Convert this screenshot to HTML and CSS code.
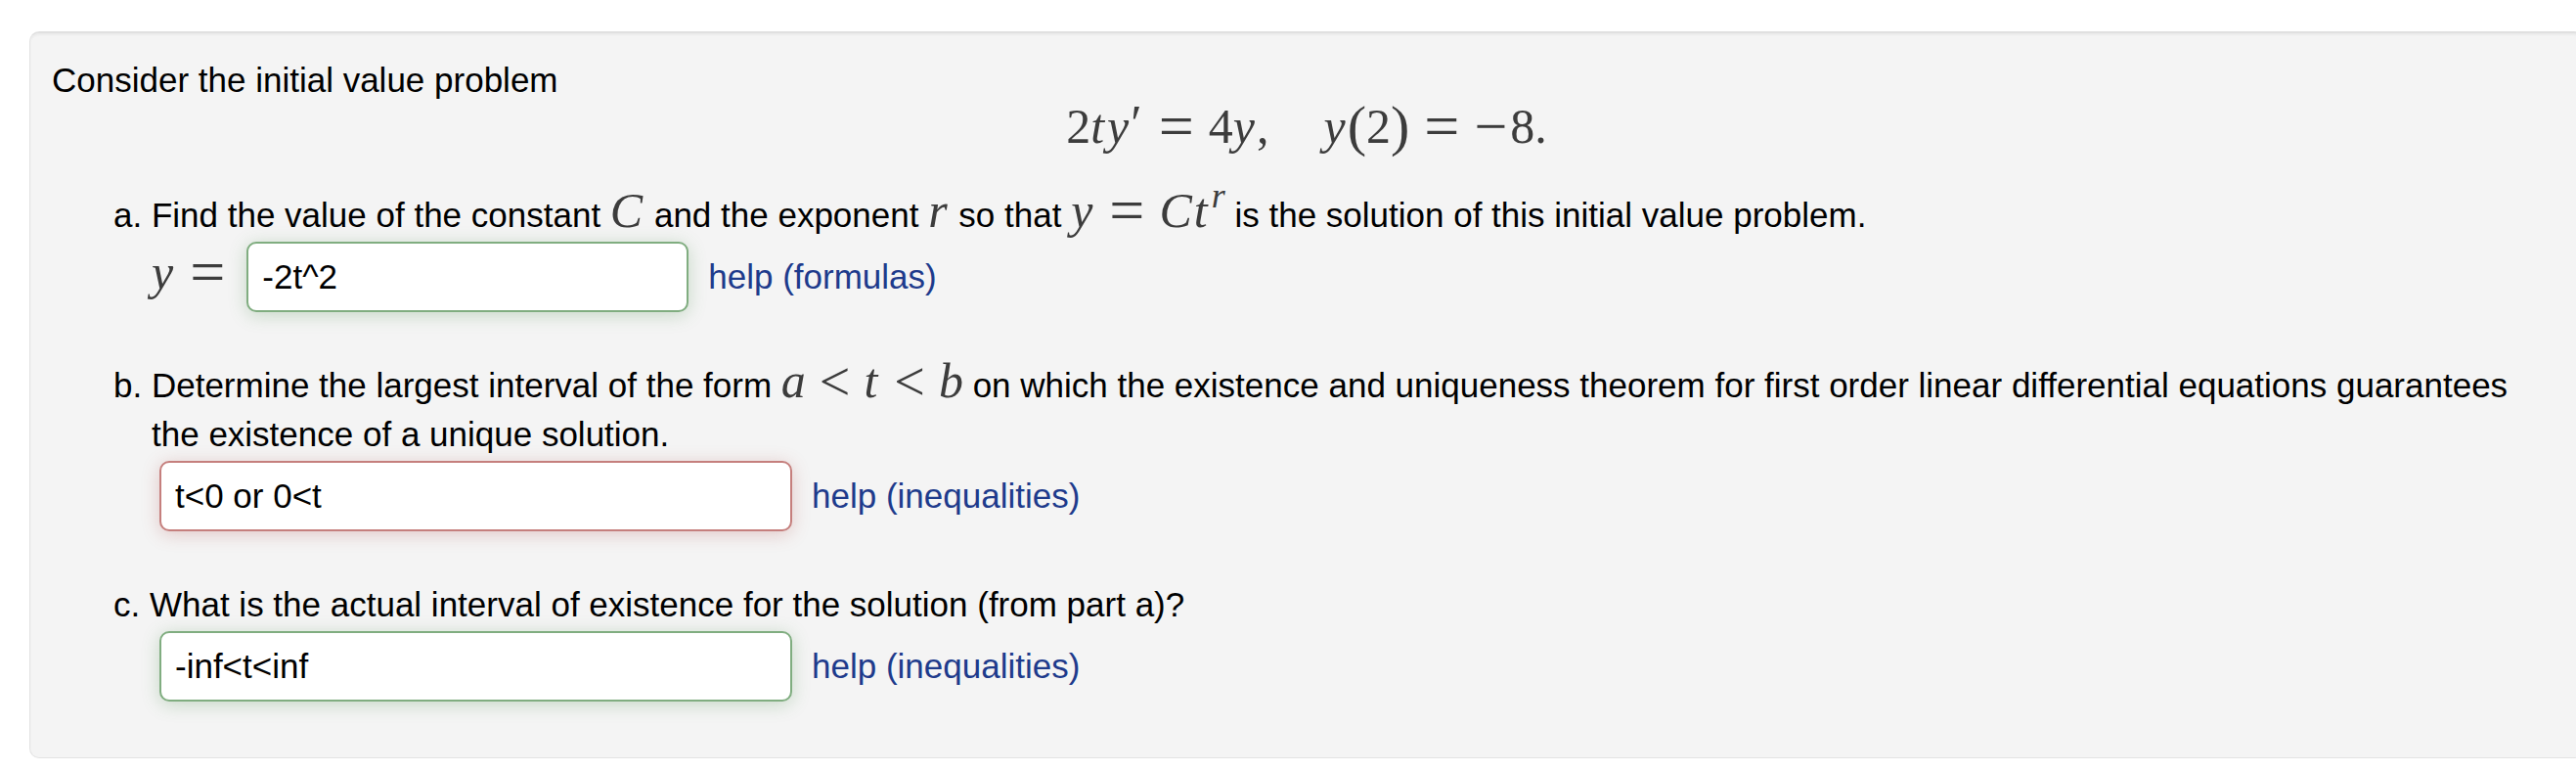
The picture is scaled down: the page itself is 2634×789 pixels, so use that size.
FILE: index.html
```html
<!DOCTYPE html>
<html lang="en">
<head>
<meta charset="utf-8">
<title>Initial value problem</title>
<link rel="stylesheet" href="styles.css">
</head>
<body>
<div class="problem">
  <div class="intro">Consider the initial value problem</div>
  <div class="display"><span class="mn">2</span><span class="mi t">t</span><span class="mi y">y</span><span class="prime">′</span><span class="rel">=</span><span class="mn">4</span><span class="mi y">y</span><span class="punct">,</span><span class="quad"></span><span class="mi y">y</span><span class="paren">(</span><span class="mn">2</span><span class="paren">)</span><span class="rel">=</span><span class="minus">−</span><span class="mn">8</span><span class="mn dot">.</span></div>

  <div class="part part-a">
    <div class="q">a. Find the value of the constant <span class="m"><span class="mi C">C</span></span> and the exponent <span class="m"><span class="mi r">r</span></span> so that <span class="m"><span class="mi y">y</span><span class="rel">=</span><span class="mi C">C</span><span class="mi t">t</span><span class="sup">r</span></span> is the solution of this initial value problem.</div>
    <div class="row"><span class="m lead"><span class="mi y">y</span><span class="rel">=</span></span><input class="ans ok w-a" type="text" value="-2t^2"><a class="help" href="#">help (formulas)</a></div>
  </div>

  <div class="part">
    <div class="q">b. Determine the largest interval of the form <span class="m"><span class="mi a">a</span><span class="rel lt">&lt;</span><span class="mi t">t</span><span class="rel lt">&lt;</span><span class="mi b">b</span></span> on which the existence and uniqueness theorem for first order linear differential equations guarantees<br>the existence of a unique solution.</div>
    <div class="row"><input class="ans bad w-b" type="text" value="t&lt;0 or 0&lt;t"><a class="help" href="#">help (inequalities)</a></div>
  </div>

  <div class="part">
    <div class="q">c. What is the actual interval of existence for the solution (from part a)?</div>
    <div class="row"><input class="ans ok w-b" type="text" value="-inf&lt;t&lt;inf"><a class="help" href="#">help (inequalities)</a></div>
  </div>
</div>
</body>
</html>
```

FILE: styles.css
```css
html, body {
  margin: 0;
  padding: 0;
  background: #ffffff;
  overflow: hidden;
}

body {
  font-family: "Liberation Sans", Arial, sans-serif;
  font-size: 35px;
  line-height: 50px;
  color: #000000;
}

.problem {
  margin: 32px -8px 0 30px;
  padding: 24px 22px 55px 22px;
  background: #f4f4f4;
  border: 1px solid #e3e3e3;
  border-top: 2px solid #e0e0e0;
  border-radius: 10px;
  box-shadow: inset 0 2px 2px rgba(0, 0, 0, 0.04);
}

.intro {
  margin: -1px 0 0 0;
}

/* ---------- math ---------- */
.display {
  margin: -3px 0 0 0;
  text-align: center;
  font-family: "Liberation Serif", "Times New Roman", serif;
  font-size: 50px;
  line-height: 50px;
  color: #3c3c3c;
}

.display span,
.m span {
  line-height: 0;
}

.m {
  font-family: "Liberation Serif", "Times New Roman", serif;
  font-size: 50px;
  line-height: 0;
  color: #3c3c3c;
}

.mi {
  font-style: italic;
}

.mi.t {
  margin-right: 3px;
}

.mi.y {
  margin-right: 2px;
}

.mi.C {
  margin-right: 2px;
}

.mi.r {
  margin-right: 2px;
}

.prime {
  font-size: 52px;
  vertical-align: 2px;
  margin-left: 0;
  margin-right: 2px;
}

.rel {
  font-size: 64px;
  vertical-align: -4px;
  margin: 0 15px;
}

.rel.lt {
  font-size: 56px;
  vertical-align: -3px;
  margin: 0 14px;
}

.punct {
  margin-right: 6px;
}

.quad {
  display: inline-block;
  width: 50px;
}

.paren {
  font-size: 58px;
  vertical-align: -2px;
}

.minus {
  font-size: 60px;
  vertical-align: -3px;
  margin-right: 3px;
}

.sup {
  font-style: italic;
  font-size: 36px;
  vertical-align: 20px;
  margin-left: 1px;
}

/* ---------- parts ---------- */
.part {
  margin-top: 48px;
  padding-left: 102px;
}

.part-a {
  margin-top: 41px;
}

.q {
  text-indent: -39px;
}

.row {
  white-space: nowrap;
}

.lead .rel {
  margin-right: 0;
}

.ans {
  box-sizing: border-box;
  height: 72px;
  margin: 2px 0;
  padding: 0 14px;
  font-family: "Liberation Sans", Arial, sans-serif;
  font-size: 35px;
  color: #000000;
  background: #ffffff;
  border: 2px solid #cccccc;
  border-radius: 10px;
  outline: none;
  vertical-align: baseline;
}

.lead + .ans {
  margin-left: 22px;
}

.row > .ans:first-child {
  margin-left: 8px;
}

.w-a {
  width: 452px;
}

.w-b {
  width: 647px;
}

.ans.ok {
  border-color: #80ad80;
  box-shadow: 0 3px 18px rgba(80, 145, 80, 0.28);
}

.ans.bad {
  border-color: #c57f7d;
  box-shadow: 0 3px 18px rgba(180, 85, 82, 0.28);
}

.help {
  margin-left: 20px;
  color: #1e3b8c;
  text-decoration: none;
}
```
